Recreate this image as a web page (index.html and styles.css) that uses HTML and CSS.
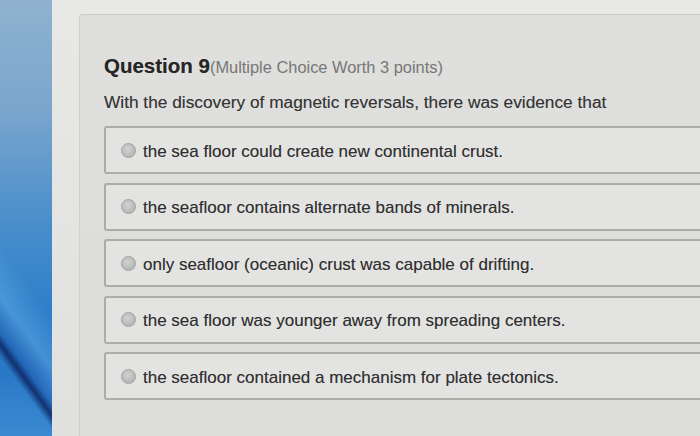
FILE: index.html
```html
<!DOCTYPE html>
<html>
<head>
<meta charset="utf-8">
<link rel="stylesheet" href="styles.css">
</head>
<body>
<div class="strip"></div>
<div class="main">
  <div class="panel">
    <h2 class="title">Question 9<span class="sub">(Multiple Choice Worth 3 points)</span></h2>
    <p class="question">With the discovery of magnetic reversals, there was evidence that</p>
    <div class="options">
      <label class="option"><span class="radio"></span><span class="label">the sea floor could create new continental crust.</span></label>
      <label class="option"><span class="radio"></span><span class="label">the seafloor contains alternate bands of minerals.</span></label>
      <label class="option"><span class="radio"></span><span class="label">only seafloor (oceanic) crust was capable of drifting.</span></label>
      <label class="option"><span class="radio"></span><span class="label">the sea floor was younger away from spreading centers.</span></label>
      <label class="option"><span class="radio"></span><span class="label">the seafloor contained a mechanism for plate tectonics.</span></label>
    </div>
  </div>
</div>
</body>
</html>
```

FILE: styles.css
```css
html, body {
  margin: 0;
  height: 436px;
  overflow: hidden;
}
body {
  display: flex;
  font-family: "Liberation Sans", Arial, sans-serif;
  background: linear-gradient(180deg, #e8e8e6 0%, #e0e0df 100%);
}
.strip {
  flex: none;
  width: 52px;
  height: 436px;
  background:
    linear-gradient(54deg, rgba(0,0,0,0) 0px, rgba(0,0,0,0) 46px, rgba(10,30,90,0.8) 54px, rgba(20,60,150,0.3) 61px, rgba(120,190,240,0.35) 82px, rgba(0,0,0,0) 112px),
    linear-gradient(180deg, #8fb2cf 0%, #7aa6cd 25%, #4b8fcb 50%, #2f80ca 70%, #2878c6 85%, #3a8ad2 100%);
}
.main {
  flex: 1;
  padding: 14px 0 0 27px;
  min-width: 0;
}
.panel {
  height: 100%;
  margin-right: -30px;
  box-sizing: border-box;
  border-top: 1px solid #c9c9c7;
  border-left: 1px solid #cfcfcd;
  border-top-left-radius: 4px;
  background: linear-gradient(180deg, #dfdfdd 0%, #dcdcdb 100%);
  padding: 39px 0 0 24px;
}
.title {
  margin: 0;
  font-size: 20.5px;
  line-height: 24px;
  font-weight: bold;
  color: #262626;
  text-shadow: 0 0 0.6px rgba(0,0,0,0.4);
}
.sub {
  font-size: 16.4px;
  font-weight: normal;
  color: #777;
  text-shadow: none;
}
.question {
  margin: 13px 0 0 0;
  font-size: 17.3px;
  line-height: 20px;
  color: #363636;
  text-shadow: 0 0 0.5px rgba(0,0,0,0.35);
}
.options {
  margin-top: 14px;
  display: flex;
  flex-direction: column;
  gap: 8.5px;
}
.option {
  display: flex;
  align-items: center;
  gap: 7px;
  height: 48px;
  box-sizing: border-box;
  border: 2px solid #acacab;
  border-right: none;
  border-radius: 3px 0 0 3px;
  background: #e3e3e2;
  padding: 3px 0 0 15px;
  font-size: 17px;
  color: #303030;
  text-shadow: 0 0 0.5px rgba(0,0,0,0.35);
}
.radio {
  flex: none;
  width: 15px;
  height: 15px;
  box-sizing: border-box;
  border-radius: 50%;
  border: 1px solid #a2a2a2;
  background: radial-gradient(circle at 45% 40%, #d2d2d2 0%, #bdbdbd 55%, #a8a8a8 100%);
  margin-top: -3px;
}
```
